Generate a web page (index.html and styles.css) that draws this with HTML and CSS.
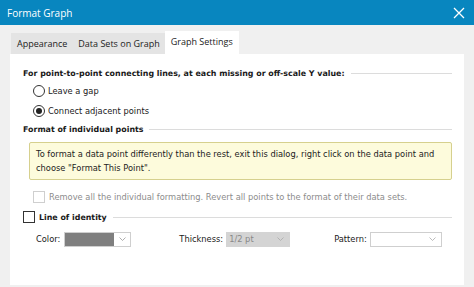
FILE: index.html
```html
<!DOCTYPE html>
<html lang="en">
<head>
    <meta charset="UTF-8">
    <title>Format Graph</title>
    <link rel="stylesheet" href="styles.css">
</head>
<body>
    <!-- Barra de título -->
    <div class="titlebar">
        <span>Format Graph</span>
        <svg class="close" width="12" height="12" viewBox="0 0 12 12">
            <path d="M1 1 L11 11 M11 1 L1 11" stroke="#fff" stroke-width="1.3"/>
        </svg>
    </div>

    <!-- Abas -->
    <div class="tabs">
        <div class="tab">Appearance</div>
        <div class="tab">Data Sets on Graph</div>
        <div class="tab active">Graph Settings</div>
    </div>

    <div class="panel">
        <div class="heading"><span>For point-to-point connecting lines, at each missing or off-scale Y value:</span></div>
        <label class="option"><span class="radio"></span>Leave a gap</label>
        <label class="option"><span class="radio checked"></span>Connect adjacent points</label>

        <div class="heading"><span>Format of individual points</span></div>
        <div class="note">To format a data point differently than the rest, exit this dialog, right click on the data point and choose "Format This Point".</div>
        <label class="option disabled"><span class="check"></span>Remove all the individual formatting. Revert all points to the format of their data sets.</label>

        <div class="heading identity"><span class="check dark"></span><span>Line of identity</span></div>
        <div class="controls">
            <span class="lbl">Color:</span>
            <div class="combo color-combo"><div class="swatch"></div><div class="arrow"><svg width="7" height="4" viewBox="0 0 7 4"><path d="M0.5 0.5 L3.5 3.5 L6.5 0.5" fill="none" stroke="#999" stroke-width="0.8"/></svg></div></div>
            <span class="lbl thick-lbl">Thickness:</span>
            <div class="combo thick-combo"><span>1/2 pt</span><svg width="7" height="4" viewBox="0 0 7 4"><path d="M0.5 0.5 L3.5 3.5 L6.5 0.5" fill="none" stroke="#aaa" stroke-width="0.8"/></svg></div>
            <span class="lbl pattern-lbl">Pattern:</span>
            <div class="combo pattern-combo"><svg width="7" height="4" viewBox="0 0 7 4"><path d="M0.5 0.5 L3.5 3.5 L6.5 0.5" fill="none" stroke="#aaa" stroke-width="0.8"/></svg></div>
        </div>
    </div>
</body>
</html>
```

FILE: styles.css
```css
/* Geral */
body {
    margin: 0;
    width: 474px;
    height: 287px;
    overflow: hidden;
    background-color: #f0f0f0;
    font-family: "DejaVu Sans", Verdana, sans-serif;
    font-size: 8.3px;
    color: #1a1a1a;
}

.titlebar {
    height: 25px;
    background-color: #0886bf;
    color: white;
    display: flex;
    align-items: center;
    justify-content: space-between;
    padding: 0 9px 0 7px;
    font-family: "Open Sans", sans-serif;
    font-size: 10px;
}

/* Abas */
.tabs {
    display: flex;
    align-items: flex-end;
    margin: 6px 0 0 11px;
    height: 23px;
    font-family: "Open Sans", sans-serif;
    font-size: 9px;
}

.tab {
    background-color: #e4e4e4;
    height: 21px;
    line-height: 21px;
    padding: 0 5px 0 6px;
    color: #222;
}

.tab.active {
    background-color: white;
    height: 23px;
    line-height: 21px;
    padding: 0 6px;
}

.panel {
    background-color: white;
    margin: 0 10px;
    height: 231px;
    box-sizing: border-box;
    padding: 11px 12px 0 13px;
}

.heading {
    display: flex;
    align-items: center;
    font-weight: bold;
    font-size: 7.9px;
    height: 16px;
}

.heading::after {
    content: "";
    flex: 1;
    border-top: 1px solid #dcdcdc;
    margin-left: 6px;
}

.option {
    display: flex;
    align-items: center;
    height: 20px;
    margin-left: 10px;
}

.radio {
    width: 10px;
    height: 10px;
    border: 1px solid #333;
    border-radius: 50%;
    margin-right: 3px;
    position: relative;
}

.radio.checked::after {
    content: "";
    position: absolute;
    left: 2px;
    top: 2px;
    width: 6px;
    height: 6px;
    border-radius: 50%;
    background-color: #222;
}

.note {
    margin: 5px 0 0 6px;
    background-color: #fdfbdc;
    border: 1px solid #d6d08e;
    border-radius: 2px;
    padding: 4px 6px;
    line-height: 14px;
    color: #222;
}

.option.disabled {
    color: #8c8c8c;
    height: 30px;
    margin-top: 2px;
}

.check {
    width: 10px;
    height: 10px;
    border: 1px solid #cfcfcf;
    margin-right: 4px;
    flex-shrink: 0;
}

.check.dark {
    border-color: #333;
}

.identity {
    height: 14px;
    margin-top: -2px;
}

/* Linha de controles */
.controls {
    display: flex;
    align-items: center;
    margin: 7px 0 0 13px;
    height: 16px;
}

.combo {
    height: 15px;
    border: 1px solid #cfcfcf;
    box-sizing: border-box;
    display: flex;
    align-items: center;
}

.color-combo {
    width: 67px;
    margin-left: 4px;
}

.swatch {
    width: 49px;
    height: 13px;
    background-color: #7f7f7f;
}

.arrow {
    flex: 1;
    display: flex;
    justify-content: center;
}

.thick-lbl {
    margin-left: 48px;
}

.thick-combo {
    width: 64px;
    margin-left: 3px;
    background-color: #d4d4d4;
    border-color: #d4d4d4;
    color: #888;
    justify-content: space-between;
    padding: 0 5px 0 2px;
}

.pattern-lbl {
    margin-left: 44px;
}

.pattern-combo {
    width: 72px;
    margin-left: 3px;
    justify-content: flex-end;
    padding-right: 5px;
}
```
